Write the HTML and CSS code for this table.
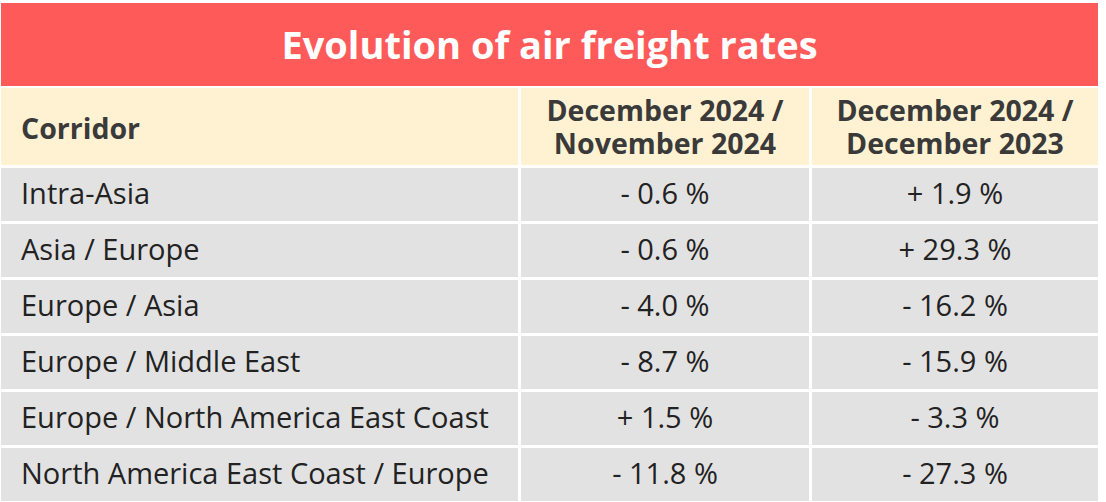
FILE: index.html
```html
<!DOCTYPE html>
<html lang="en">
<head>
<meta charset="utf-8">
<title>Evolution of air freight rates</title>
<link rel="stylesheet" href="styles.css">
</head>
<body>
<div class="sheet">
  <div class="title">Evolution of air freight rates</div>
  <div class="grid">
    <div class="cell head left">Corridor</div>
    <div class="cell head center"><span class="stack"><span>December 2024 /</span><span>November 2024</span></span></div>
    <div class="cell head center"><span class="stack"><span>December 2024 /</span><span>December 2023</span></span></div>

    <div class="cell row left">Intra-Asia</div>
    <div class="cell row center">- 0.6 %</div>
    <div class="cell row center">+ 1.9 %</div>

    <div class="cell row left">Asia / Europe</div>
    <div class="cell row center">- 0.6 %</div>
    <div class="cell row center">+ 29.3 %</div>

    <div class="cell row left">Europe / Asia</div>
    <div class="cell row center">- 4.0 %</div>
    <div class="cell row center">- 16.2 %</div>

    <div class="cell row left">Europe / Middle East</div>
    <div class="cell row center">- 8.7 %</div>
    <div class="cell row center">- 15.9 %</div>

    <div class="cell row left">Europe / North America East Coast</div>
    <div class="cell row center">+ 1.5 %</div>
    <div class="cell row center">- 3.3 %</div>

    <div class="cell row left">North America East Coast / Europe</div>
    <div class="cell row center">- 11.8 %</div>
    <div class="cell row center">- 27.3 %</div>
  </div>
</div>
</body>
</html>
```

FILE: styles.css
```css
html, body {
  margin: 0;
  padding: 0;
  background: #ffffff;
}

body {
  font-family: "Open Sans", "Liberation Sans", sans-serif;
}

.sheet {
  width: 1097px;
  padding: 3px 0 0 1px;
  display: flex;
  flex-direction: column;
  gap: 2px;
}

.title {
  height: 83px;
  background: #ff5a5a;
  color: #ffffff;
  font-weight: 700;
  font-size: 38px;
  display: flex;
  align-items: center;
  justify-content: center;
  padding-bottom: 2px;
  box-sizing: border-box;
}

.grid {
  display: grid;
  grid-template-columns: 517px 288px 286px;
  grid-template-rows: 77px repeat(6, 53px);
  gap: 3px;
}

.cell {
  display: flex;
  align-items: center;
  box-sizing: border-box;
}

.head {
  background: #fff2d3;
  color: #3a3a3a;
  font-weight: 700;
  font-size: 28.5px;
}

.stack {
  display: flex;
  flex-direction: column;
  align-items: center;
  line-height: 33px;
}

.stack span {
  height: 33px;
  overflow: visible;
  white-space: nowrap;
}

.row {
  background: #e2e2e2;
  color: #222222;
  font-size: 29px;
  padding-bottom: 4px;
}

.left {
  padding-left: 20px;
}

.center {
  justify-content: center;
  text-align: center;
}

.head.left {
  padding-top: 2px;
}
```
